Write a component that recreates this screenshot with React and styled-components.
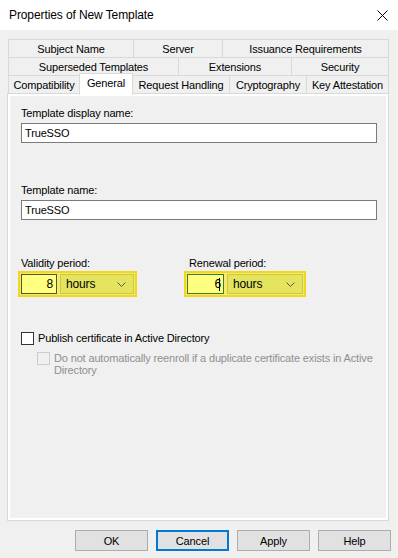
import React from "react";
import styled, { createGlobalStyle } from "styled-components";

const GlobalStyle = createGlobalStyle`
  html, body {
    margin: 0;
    padding: 0;
    background: #f0f0f0;
  }
  body {
    font-family: "Liberation Sans", Arial, sans-serif;
    font-size: 11px;
    letter-spacing: -0.15px;
    color: #000;
  }
`;

const Dialog = styled.div`
  width: 398px;
  height: 558px;
  display: flex;
  flex-direction: column;
  background: #f0f0f0;
  overflow: hidden;
`;

const TitleBar = styled.div`
  height: 30px;
  flex: 0 0 30px;
  background: #fff;
  display: flex;
  align-items: center;
  justify-content: space-between;
  padding: 0 10px 0 9px;
  font-size: 12px;
  letter-spacing: -0.1px;
`;

const Body = styled.div`
  flex: 1;
  display: flex;
  flex-direction: column;
  padding: 9px 7px 0 8px;
`;

const Tabs = styled.div`
  display: flex;
  flex-direction: column;
  width: 381px;
`;

const TabRow = styled.div`
  display: flex;
  height: 19px;
  margin-top: ${(p) => (p.first ? "0" : "-1px")};
`;

const Tab = styled.div`
  box-sizing: border-box;
  width: ${(p) => p.w}px;
  height: ${(p) => (p.active ? "22px" : "19px")};
  margin-top: ${(p) => (p.active ? "-2px" : "0")};
  margin-left: ${(p) => (p.first ? "0" : "-1px")};
  border: 1px solid #d9d9d9;
  border-bottom: ${(p) => (p.active ? "none" : "1px solid #d9d9d9")};
  background: ${(p) => (p.active ? "#fff" : "#f0f0f0")};
  position: relative;
  z-index: ${(p) => (p.active ? 2 : 1)};
  display: flex;
  align-items: center;
  justify-content: center;
  padding-bottom: ${(p) => (p.active ? "3px" : "0")};
  white-space: nowrap;
`;

const Panel = styled.div`
  box-sizing: border-box;
  width: 382px;
  height: 428px;
  margin-left: -1px;
  margin-top: -1px;
  border: 1px solid #d9d9d9;
  box-shadow: inset 0 0 0 2px #fff;
  padding: 12px 11px 0 13px;
  display: flex;
  flex-direction: column;
`;

const Label = styled.div`
  line-height: 14px;
  height: 14px;
  margin-top: ${(p) => p.mt || 0}px;
  padding-left: ${(p) => p.pl || 0}px;
`;

const TextInput = styled.div`
  box-sizing: border-box;
  height: 20px;
  margin-top: 3px;
  background: #fff;
  border: 1px solid #7a7a7a;
  display: flex;
  align-items: center;
  padding-left: 3px;
`;

const PeriodRow = styled.div`
  display: grid;
  grid-template-columns: 166px 130px;
  margin-top: 36px;
`;

const PeriodColumn = styled.div`
  display: flex;
  flex-direction: column;
`;

const Highlight = styled.div`
  box-sizing: border-box;
  display: flex;
  gap: 3px;
  width: ${(p) => p.w}px;
  height: 26px;
  margin-top: 1px;
  margin-left: -3px;
  border: 2px solid #f0d81e;
  padding: 1px;
  background: #f6ea6e;
`;

const NumberBox = styled.div`
  box-sizing: border-box;
  width: ${(p) => p.w}px;
  height: 20px;
  background: #ffff80;
  border: 1px solid ${(p) => (p.focused ? "#3f7a2a" : "#55552a")};
  display: flex;
  align-items: center;
  justify-content: flex-end;
  padding-right: 3px;
  font-size: 12px;
`;

const Caret = styled.span`
  display: inline-block;
  width: 1px;
  height: 13px;
  background: #000;
  margin-left: -2px;
`;

const SelectBox = styled.div`
  box-sizing: border-box;
  flex: 1;
  height: 20px;
  background: #e4e45e;
  border: 1px solid #c9c94a;
  display: flex;
  align-items: center;
  justify-content: space-between;
  padding: 0 7px 0 5px;
  font-size: 12px;
`;

const CheckRow = styled.label`
  display: flex;
  align-items: flex-start;
  gap: 4px;
  margin-top: ${(p) => p.mt}px;
  margin-left: ${(p) => p.indent || 0}px;
  color: ${(p) => (p.disabled ? "#8f8f8f" : "#000")};
  line-height: 12px;
`;

const Box = styled.span`
  box-sizing: border-box;
  flex: 0 0 13px;
  width: 13px;
  height: 13px;
  background: ${(p) => (p.disabled ? "#f0f0f0" : "#fff")};
  border: 1px solid ${(p) => (p.disabled ? "#cccccc" : "#333")};
  margin-top: ${(p) => p.mt || 0}px;
`;

const CheckText = styled.span`
  width: ${(p) => p.w}px;
  line-height: ${(p) => p.lh || 12}px;
`;

const ButtonBar = styled.div`
  display: flex;
  justify-content: flex-end;
  gap: 8px;
  margin-top: 9px;
`;

const Button = styled.button`
  box-sizing: border-box;
  width: 73px;
  height: 21px;
  background: #e1e1e1;
  border: ${(p) => (p.focused ? "2px solid #0078d7" : "1px solid #adadad")};
  font-family: "Liberation Sans", Arial, sans-serif;
  font-size: 11px;
  letter-spacing: -0.15px;
  color: #000;
  padding: 0;
`;

const CloseIcon = () => (
  <svg width="11" height="11" viewBox="0 0 11 11">
    <path d="M0.5 0.5 L10.5 10.5 M10.5 0.5 L0.5 10.5" stroke="#000" strokeWidth="1" />
  </svg>
);

const Chevron = () => (
  <svg width="9" height="5" viewBox="0 0 9 5">
    <polyline points="0.5,0.5 4.5,4.5 8.5,0.5" fill="none" stroke="#555" strokeWidth="1" />
  </svg>
);

const rows = [
  [
    ["Subject Name", 126],
    ["Server", 90],
    ["Issuance Requirements", 167],
  ],
  [
    ["Superseded Templates", 171],
    ["Extensions", 114],
    ["Security", 98],
  ],
  [
    ["Compatibility", 72],
    ["General", 54, true],
    ["Request Handling", 98],
    ["Cryptography", 78],
    ["Key Attestation", 83],
  ],
];

export default function App() {
  return (
    <>
      <GlobalStyle />
      <Dialog>
        <TitleBar>
          <span>Properties of New Template</span>
          <CloseIcon />
        </TitleBar>
        <Body>
          <Tabs>
            {rows.map((row, i) => (
              <TabRow key={i} first={i === 0}>
                {row.map(([name, w, active], j) => (
                  <Tab key={name} w={w} active={active} first={j === 0}>
                    {name}
                  </Tab>
                ))}
              </TabRow>
            ))}
          </Tabs>
          <Panel>
            <Label>Template display name:</Label>
            <TextInput>TrueSSO</TextInput>
            <Label mt={40}>Template name:</Label>
            <TextInput>TrueSSO</TextInput>
            <PeriodRow>
              <PeriodColumn>
                <Label>Validity period:</Label>
                <Highlight w={119}>
                  <NumberBox w={36}>8</NumberBox>
                  <SelectBox>
                    hours
                    <Chevron />
                  </SelectBox>
                </Highlight>
              </PeriodColumn>
              <PeriodColumn>
                <Label pl={2}>Renewal period:</Label>
                <Highlight w={122}>
                  <NumberBox w={37} focused>
                    6<Caret />
                  </NumberBox>
                  <SelectBox>
                    hours
                    <Chevron />
                  </SelectBox>
                </Highlight>
              </PeriodColumn>
            </PeriodRow>
            <CheckRow mt={35}>
              <Box />
              <CheckText w={330} lh={13}>
                Publish certificate in Active Directory
              </CheckText>
            </CheckRow>
            <CheckRow mt={7} indent={16} disabled>
              <Box disabled mt={0} />
              <CheckText w={322}>
                Do not automatically reenroll if a duplicate certificate exists in Active Directory
              </CheckText>
            </CheckRow>
          </Panel>
          <ButtonBar>
            <Button>OK</Button>
            <Button focused>Cancel</Button>
            <Button>Apply</Button>
            <Button>Help</Button>
          </ButtonBar>
        </Body>
      </Dialog>
    </>
  );
}
